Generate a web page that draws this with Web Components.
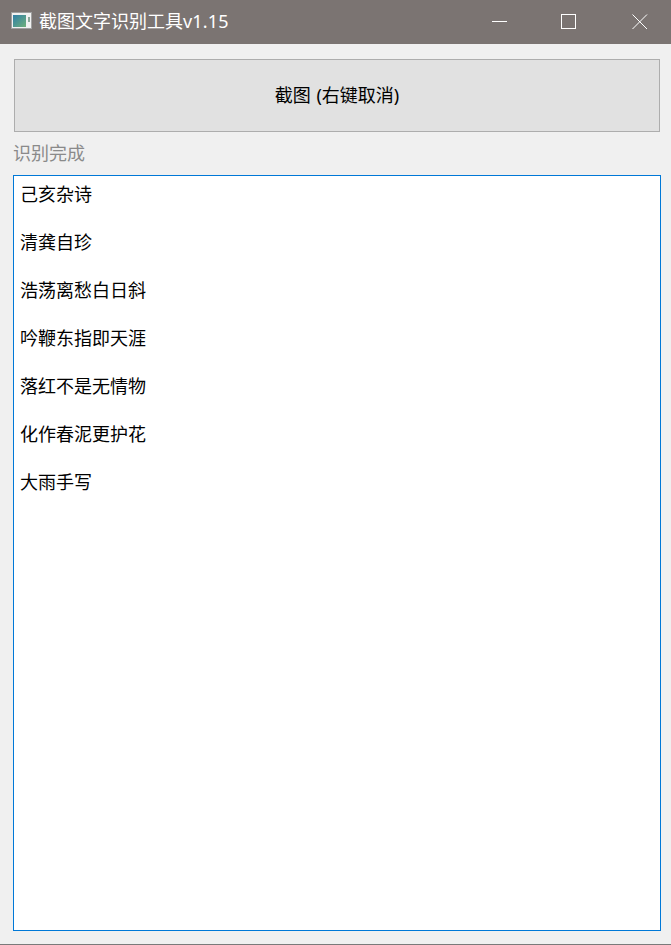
<!DOCTYPE html>
<html lang="zh-CN"><head><meta charset="utf-8"><style>
html,body{margin:0;padding:0;height:100%}
body{background:#f0f0f0;font-family:"Noto Sans","Noto Sans CJK SC",sans-serif;font-size:18px}
</style></head><body>
<app-window>
<title-bar>截图文字识别工具<span style="letter-spacing:.2px">v1.15</span></title-bar>
<main-panel>
<push-button>截图 (右键取消)</push-button>
<status-label>识别完成</status-label>
<text-view>
<text-line>己亥杂诗</text-line>
<text-line>清龚自珍</text-line>
<text-line>浩荡离愁白日斜</text-line>
<text-line>吟鞭东指即天涯</text-line>
<text-line>落红不是无情物</text-line>
<text-line>化作春泥更护花</text-line>
<text-line>大雨手写</text-line>
</text-view>
</main-panel>
</app-window>
<script>
function def(name,html){customElements.define(name,class extends HTMLElement{constructor(){super();this.attachShadow({mode:'open'}).innerHTML=html;}});}
def('app-window',`<style>:host{display:flex;flex-direction:column;height:945px;box-sizing:border-box;border-bottom:1px solid #7a7a7a}</style><slot></slot>`);
def('title-bar',`<style>
:host{display:flex;align-items:center;height:44px;flex:none;background:#7b7472;color:#fff;font-size:18px}
.ico{margin:0 7px 3px 11px;width:21px;height:17px;flex:none;display:block}
.t{flex:1;line-height:24px;padding-bottom:2px;white-space:nowrap}
.b{height:44px;display:flex;align-items:center;justify-content:center;flex:none}
.min{width:59px}.max{width:79px}.close{width:63px}
svg.c{display:block;width:16px;height:16px}
</style>
<svg class="ico" viewBox="0 0 21 17"><defs><linearGradient id="g" x1="0" y1="0" x2="1" y2="1"><stop offset="0" stop-color="#2f7fa8"/><stop offset="1" stop-color="#6fb07a"/></linearGradient></defs><rect x=".5" y=".5" width="20" height="16" fill="#f2f2f2" stroke="#a0a0a0"/><rect x="2" y="3" width="13" height="12" fill="url(#g)"/><rect x="17" y="5" width="2" height="5" fill="#8aa79a"/></svg>
<span class="t"><slot></slot></span>
<span class="b min"><svg class="c" viewBox="0 0 16 16"><path d="M0 7.5H15" stroke="#fff" fill="none"/></svg></span>
<span class="b max"><svg class="c" viewBox="0 0 16 16"><rect x=".5" y=".5" width="14" height="14" stroke="#fff" fill="none"/></svg></span>
<span class="b close"><svg class="c" viewBox="0 0 16 16"><path d="M.5 .5L15 15M15 .5L.5 15" stroke="#fff" fill="none"/></svg></span>`);
def('main-panel',`<style>:host{display:flex;flex-direction:column;flex:1;min-height:0;padding:15px 10px 13px 13px;box-sizing:border-box}</style><slot></slot>`);
def('push-button',`<style>:host{display:flex;align-items:center;justify-content:center;height:73px;flex:none;box-sizing:border-box;margin:0 1px;background:#e1e1e1;border:1px solid #adadad;color:#000;font-size:18px;line-height:24px;padding-bottom:2px;word-spacing:1px}</style><slot></slot>`);
def('status-label',`<style>:host{display:block;height:43px;flex:none;box-sizing:border-box;padding-top:9px;color:#8a8a8a;font-size:18px;line-height:24px}</style><slot></slot>`);
def('text-view',`<style>:host{display:flex;flex-direction:column;gap:24px;flex:1;min-height:0;box-sizing:border-box;background:#fff;border:1px solid #0078d7;padding:6px 6px 5px 6px;color:#000;font-size:18px}</style><slot></slot>`);
def('text-line',`<style>:host{display:block;line-height:24px;height:24px;white-space:nowrap}</style><slot></slot>`);
</script>
</body></html>
